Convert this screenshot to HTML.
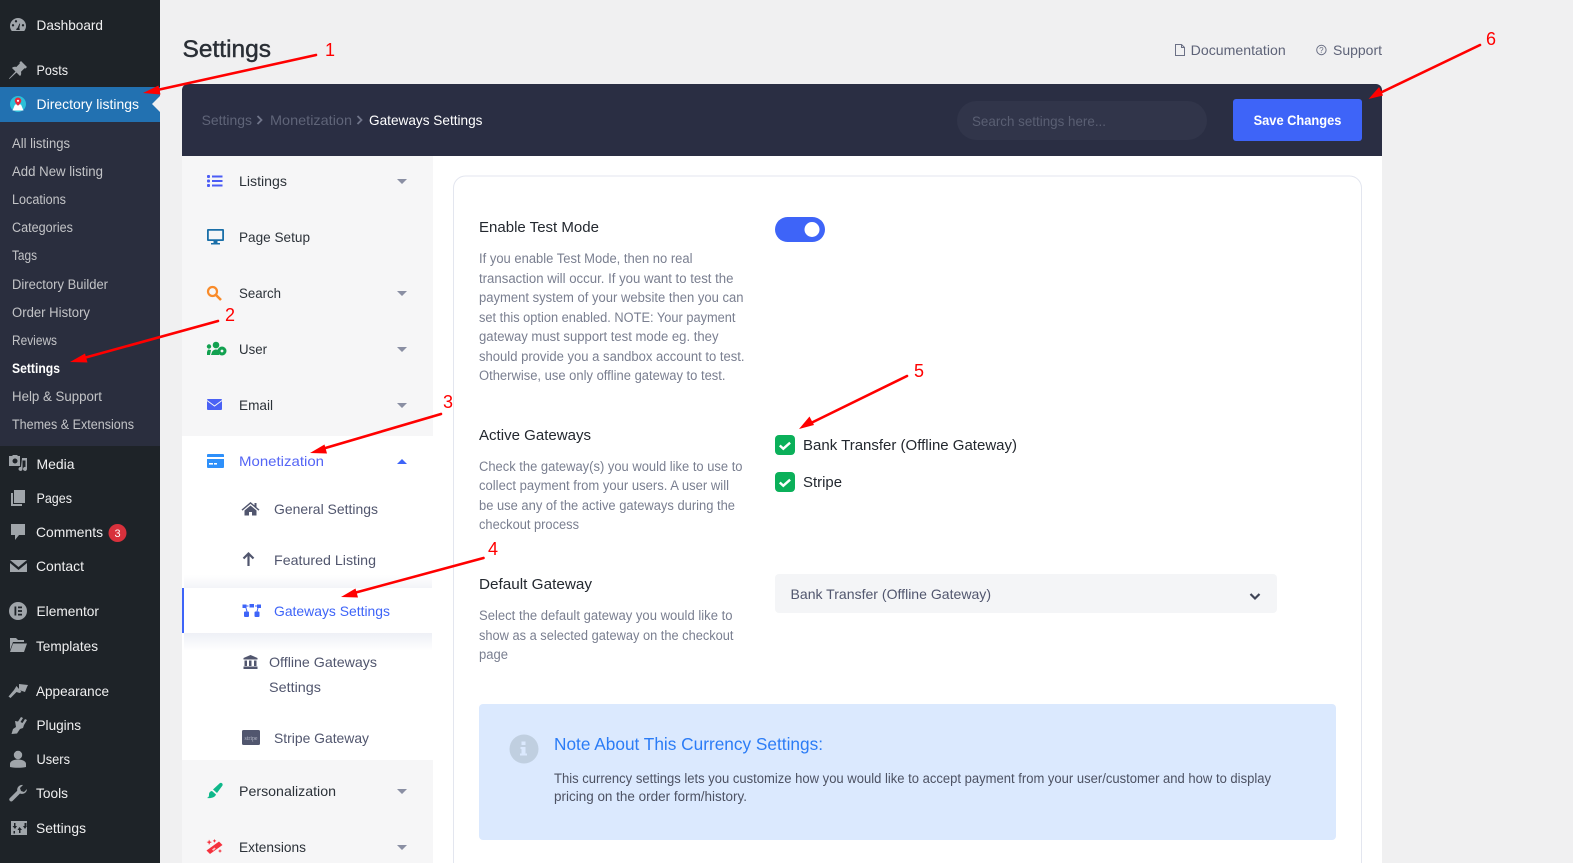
<!DOCTYPE html>
<html lang="en"><head><meta charset="utf-8"><title>Settings</title>
<style>
html,body{margin:0;padding:0;background:#f0f0f1;width:1573px;height:863px;overflow:hidden}
svg{display:block}
text{font-family:"Liberation Sans",sans-serif;white-space:pre}
.m{font-size:14px;fill:#f0f0f1}
.s{font-size:13.5px;fill:#c3c4c7}
.n{font-size:14px;fill:#2c3239}
.u{font-size:14px;fill:#51566e}
.p{font-size:13.5px;fill:#7a7f90}
.h{font-size:15px;fill:#23282f}
.r{font-size:18px;fill:#f00}
.i{fill:#a0a5aa}
</style></head><body>
<svg width="1573" height="863" viewBox="0 0 1573 863" xmlns="http://www.w3.org/2000/svg">
<defs>
<linearGradient id="sd" x1="0" y1="0" x2="0" y2="1"><stop offset="0" stop-color="#eef0f6"/><stop offset="1" stop-color="#fff"/></linearGradient>
<linearGradient id="su" x1="0" y1="1" x2="0" y2="0"><stop offset="0" stop-color="#f3f4f8"/><stop offset="1" stop-color="#fff"/></linearGradient>
</defs>
<rect width="1573" height="863" fill="#f0f0f1"/>

<!-- WP sidebar -->
<rect width="160" height="863" fill="#1e2328"/>
<rect y="122" width="160" height="324" fill="#2a2e3e"/>
<rect y="87" width="160" height="35" fill="#2271b1"/>
<path d="M160 96l-8 8 8 8z" fill="#f0f0f1"/>

<!-- sidebar icons -->
<path class="i" fill-rule="evenodd" d="M18 18a8 8 0 0 0-8 8c0 2 .7 3.700 1.800 5h12.400A8 8 0 0 0 26 26a8 8 0 0 0-8-8zm-5 8.500a1.200 1.200 0 1 1 0-2.400a1.200 1.200 0 0 1 0 2.400zm3-4a1.200 1.200 0 1 1 0-2.400a1.200 1.200 0 0 1 0 2.400zm3.800 7.500h-3.600c0-1 .6-1.700 1.300-2l2-4.500 .6 .2-.8 4.400c.4.400.5 1.200.5 1.900zm3.200-3.500a1.200 1.200 0 1 1 0-2.400a1.200 1.200 0 0 1 0 2.400z"/>
<path class="i" d="M21 61l6 6-1.500 1.500-1-.3-3.500 3.500c.5 2 0 3.500-1 4.300l-3.500-3.500-7 6.500-.5-.5 6.500-7-3.500-3.500c.8-1 2.300-1.500 4.300-1l3.500-3.500-.3-1z"/>
<circle cx="18" cy="104" r="8" fill="#2bbfd8"/>
<path d="M12.500 110.500l2.500-6h6l2.500 6z" fill="#fff"/>
<path d="M18 97.500a3.300 3.300 0 0 1 3.300 3.300c0 2-3.300 5-3.300 5s-3.300-3-3.300-5a3.300 3.300 0 0 1 3.300-3.300z" fill="#e8283c"/><circle cx="18" cy="100.800" r="1.100" fill="#fff"/>
<path class="i" fill-rule="evenodd" d="M9 456h3l1-1h4l1 1h2v10H9zm6 2.500a2.500 2.500 0 1 0 0 5 2.500 2.500 0 0 0 0-5z"/>
<path class="i" d="M22 458h5v11a2 2 0 1 1-1.500-2v-6.500H22.500v8.500a2 2 0 1 1-1.500-2z"/>
<path class="i" d="M14 490h11v13H14zM11 493h2v11h9v2H11z"/>
<path class="i" d="M11 524h14v11h-6l-4 5v-5h-4z"/>
<path class="i" d="M10 560h17l-8.500 7zM10 563l8.500 7 8.500-7v9H10z"/>
<path class="i" fill-rule="evenodd" d="M18 602a9 9 0 1 0 0 18 9 9 0 0 0 0-18zm-3.500 4.500h1.800v9h-1.800zm3.500 0h4v1.800h-4zm0 3.600h4v1.800h-4zm0 3.600h4v1.800h-4z"/>
<path class="i" d="M10 638h6l2 2h6v2h-11l-3 8zM13 643.500h14l-3 8.500H10z"/>
<path class="i" d="M19 684l9 1-1 2-2 5-6-2zM16.500 686l5 6-2 1-3-1-6 6-2-1.500 5.500-6.500z"/>
<path class="i" d="M21 717l2 1-2.500 4 2 1 2.500-4 2 1-3 5-1 3-3 1-2 3-1 1.500-5.500 .5 1.500-5 3-2-.5-3-.5-3 3 .5z"/>
<circle class="i" cx="18" cy="755" r="4.200"/>
<path class="i" d="M10 767v-3c0-3 4-4.500 8-4.500s8 1.500 8 4.500v3c-5 1-11 1-16 0z"/>
<path class="i" d="M27 789a5 5 0 0 1-7 4.500l-7.500 7.500a2 2 0 0 1-2.800-2.800l7.500-7.500A5 5 0 0 1 23 785l-3 3 1 3 3 1 3-3z"/>
<path class="i" fill-rule="evenodd" d="M11 821h16v14H11zm3 2v3h-1.500l2.500 3 2-3h-1.500v-3zm-.5 8v2.500h1.500V831zm7 2v-3H22l-2.500-3-2 3H19v3zm4-10v3H23l2 3 2-3h-.5v-3z"/>

<!-- sidebar text -->
<text class="m" x="36.500" y="30" textLength="66.500" lengthAdjust="spacingAndGlyphs">Dashboard</text>
<text class="m" x="36.500" y="75" textLength="31.500" lengthAdjust="spacingAndGlyphs">Posts</text>
<text class="m" x="36.500" y="109" textLength="102.500" lengthAdjust="spacingAndGlyphs" style="fill:#fff">Directory listings</text>
<text class="s" x="12" y="148" textLength="58" lengthAdjust="spacingAndGlyphs">All listings</text>
<text class="s" x="12" y="176" textLength="91" lengthAdjust="spacingAndGlyphs">Add New listing</text>
<text class="s" x="12" y="204" textLength="54" lengthAdjust="spacingAndGlyphs">Locations</text>
<text class="s" x="12" y="232" textLength="61" lengthAdjust="spacingAndGlyphs">Categories</text>
<text class="s" x="12" y="260" textLength="25" lengthAdjust="spacingAndGlyphs">Tags</text>
<text class="s" x="12" y="289" textLength="96" lengthAdjust="spacingAndGlyphs">Directory Builder</text>
<text class="s" x="12" y="317" textLength="78" lengthAdjust="spacingAndGlyphs">Order History</text>
<text class="s" x="12" y="345" textLength="45" lengthAdjust="spacingAndGlyphs">Reviews</text>
<text class="s" x="12" y="373" textLength="48" lengthAdjust="spacingAndGlyphs" style="fill:#fff;font-weight:700">Settings</text>
<text class="s" x="12" y="401" textLength="90" lengthAdjust="spacingAndGlyphs">Help &amp; Support</text>
<text class="s" x="12" y="429" textLength="122" lengthAdjust="spacingAndGlyphs">Themes &amp; Extensions</text>
<text class="m" x="36.500" y="469" textLength="38" lengthAdjust="spacingAndGlyphs">Media</text>
<text class="m" x="36.500" y="503" textLength="35.500" lengthAdjust="spacingAndGlyphs">Pages</text>
<text class="m" x="36" y="537" textLength="67" lengthAdjust="spacingAndGlyphs">Comments</text>
<circle cx="117.500" cy="533" r="9" fill="#d8313c"/>
<text x="117.500" y="537" text-anchor="middle" style="font-size:11px;fill:#fff">3</text>
<text class="m" x="36" y="571" textLength="48" lengthAdjust="spacingAndGlyphs">Contact</text>
<text class="m" x="36.500" y="616" textLength="62.500" lengthAdjust="spacingAndGlyphs">Elementor</text>
<text class="m" x="36" y="651" textLength="62" lengthAdjust="spacingAndGlyphs">Templates</text>
<text class="m" x="36" y="696" textLength="73" lengthAdjust="spacingAndGlyphs">Appearance</text>
<text class="m" x="36.500" y="730" textLength="44.500" lengthAdjust="spacingAndGlyphs">Plugins</text>
<text class="m" x="36.500" y="764" textLength="33.500" lengthAdjust="spacingAndGlyphs">Users</text>
<text class="m" x="36" y="798" textLength="32" lengthAdjust="spacingAndGlyphs">Tools</text>
<text class="m" x="36" y="833" textLength="50" lengthAdjust="spacingAndGlyphs">Settings</text>

<!-- page head -->
<text x="182.500" y="57" textLength="88.500" lengthAdjust="spacingAndGlyphs" stroke="#2a2f36" stroke-width=".45" style="font-size:24px;fill:#2a2f36">Settings</text>
<path d="M1175.500 44.500h6l3 3v8h-9zM1181.500 44.500v3h3" fill="none" stroke="#6b7085"/>
<text x="1190.700" y="55" textLength="95" lengthAdjust="spacingAndGlyphs" style="font-size:14px;fill:#5e6378">Documentation</text>
<circle cx="1321.400" cy="50" r="4.700" fill="none" stroke="#6b7085"/>
<text x="1321.400" y="53" text-anchor="middle" style="font-size:8px;fill:#6b7085">?</text>
<text x="1333" y="55" textLength="49" lengthAdjust="spacingAndGlyphs" style="font-size:14px;fill:#5e6378">Support</text>

<!-- panel -->
<rect x="182" y="156" width="1200" height="707" fill="#fff"/>
<path d="M182 156V90a6 6 0 0 1 6-6H1376a6 6 0 0 1 6 6V156z" fill="#2a2e43"/>
<text x="201.600" y="125" textLength="50.400" lengthAdjust="spacingAndGlyphs" style="font-size:14px;fill:#5f6478">Settings</text>
<path d="M257.500 116l4 4-4 4" fill="none" stroke="#70758a" stroke-width="1.800"/>
<text x="270" y="125" textLength="82" lengthAdjust="spacingAndGlyphs" style="font-size:14px;fill:#5f6478">Monetization</text>
<path d="M357.500 116l4 4-4 4" fill="none" stroke="#70758a" stroke-width="1.800"/>
<text x="369" y="125" textLength="113.500" lengthAdjust="spacingAndGlyphs" style="font-size:14px;fill:#fff">Gateways Settings</text>
<rect x="957" y="101" width="250" height="39" rx="19.500" fill="#31354a"/>
<text x="972" y="126" textLength="134" lengthAdjust="spacingAndGlyphs" style="font-size:14px;fill:#5a5f73">Search settings here...</text>
<rect x="1233" y="99" width="129" height="42" rx="3" fill="#3e64f8"/>
<text x="1253.600" y="125" textLength="87.800" lengthAdjust="spacingAndGlyphs" style="font-size:14px;font-weight:700;fill:#fff">Save Changes</text>

<!-- left nav -->
<rect x="182" y="156" width="251" height="280" fill="#f6f6f7"/>
<rect x="182" y="760" width="251" height="103" fill="#f6f6f7"/>
<rect x="182" y="436" width="251" height="324" fill="#fff"/>
<rect x="184" y="575" width="248" height="13" fill="url(#su)"/>
<rect x="184" y="633" width="248" height="18" fill="url(#sd)"/>
<rect x="182" y="588" width="2" height="45" fill="#3e64f8"/>

<!-- nav icons -->
<g fill="#4b5cf5"><rect x="207" y="175" width="3" height="3" rx="1"/><rect x="207" y="179.500" width="3" height="3" rx="1"/><rect x="207" y="184" width="3" height="3" rx="1"/><rect x="212" y="175.500" width="10.500" height="2"/><rect x="212" y="180" width="10.500" height="2"/><rect x="212" y="184.500" width="10.500" height="2"/></g>
<path fill="#1a6fa8" fill-rule="evenodd" d="M208 229h15a1 1 0 0 1 1 1v10a1 1 0 0 1-1 1h-5.500v2h2.500v1.500h-9V243h2.500v-2H208a1 1 0 0 1-1-1v-10a1 1 0 0 1 1-1zm.8 1.800v8.400h13.400v-8.400z"/>
<circle cx="212.500" cy="291.500" r="4.500" fill="none" stroke="#f98b2a" stroke-width="2.200"/><path d="M216 295l5 5" stroke="#f98b2a" stroke-width="2.600"/>
<g fill="#12a150"><circle cx="216" cy="345" r="3.300"/><circle cx="209" cy="346.500" r="2.200"/><path d="M207 355v-3l1-2.500 3 .5-1 5zM211 355l1-3c1-2 3-2.500 4-2.500l3 .5v5z"/><circle cx="222" cy="351" r="4.500"/></g><circle cx="222" cy="351" r="1.400" fill="#f6f6f7"/>
<rect x="207" y="399" width="15" height="11" rx="1" fill="#4a61f5"/><path d="M207 400.500l7.500 5.500 7.500-5.500" fill="none" stroke="#f6f6f7"/>
<path fill="#2e90fa" d="M208 454h15a1 1 0 0 1 1 1v2h-17v-2a1 1 0 0 1 1-1zM207 459h17v8a1 1 0 0 1-1 1h-15a1 1 0 0 1-1-1z"/><rect x="209" y="463" width="4" height="1.600" fill="#fff"/><rect x="214" y="463" width="3" height="1.600" fill="#fff"/>
<path fill="#51566e" d="M250.500 502l4 3.400V503h2v4.100l3 2.500-1 1-8-6.700-8 6.700-1-1zM244.500 510.500l6-5 6 5v5h-4.500v-3.500h-3v3.500h-4.500z"/>
<path d="M248.500 566v-12M243.500 558.500l5-5 5 5" fill="none" stroke="#51566e" stroke-width="2.200"/>
<g fill="#3e64f8"><rect x="242.500" y="604.500" width="4" height="3.500"/><rect x="249.500" y="604" width="4.500" height="3.500"/><rect x="257" y="604.500" width="4" height="3.500"/><rect x="244" y="611.500" width="5" height="5.500" rx="1"/><rect x="254.500" y="611.500" width="5" height="5.500" rx="1"/><path d="M246.500 606h2M255 606h2M246 608l1 3.500M258 608l-1 3.500" stroke="#3e64f8" fill="none"/></g>
<path fill="#51566e" fill-rule="evenodd" d="M250.500 655l7 3v1.500h-14V658zM244.500 660.500h2.500v5.500h-2.500zM249 660.500h2.500v5.500H249zM254 660.500h2.500v5.500H254zM243.500 666.500h14V669h-14z"/>
<rect x="242" y="730" width="18" height="15" rx="1.500" fill="#51566e"/>
<text x="251" y="740" text-anchor="middle" textLength="13" lengthAdjust="spacingAndGlyphs" style="font-size:6px;fill:#b4b8c6;font-family:'Liberation Serif',serif">stripe</text>
<path fill="#0fb88a" d="M220 783c2-.5 3 .8 2.500 2.500L217 793l-4-3.500z"/><path fill="#0fb88a" d="M212 791l4 3.500c-1 3-5 4-9 3.500 2-1 2-2 2-3.500 0-2 1.500-3.500 3-3.500z"/>
<path fill="#f5313d" d="M219 841.500l3.500 3.500-12.500 9-3.500-3.500z"/><path fill="#fff" d="M212 849.500l2.500-2 1.200 1.200-2.500 2z" opacity=".7"/><path fill="#f5313d" d="M209 839.500l1 2 2 .5-2 1-1 2-.5-2-2-1 2-.5zM214.500 839l.6 1.300 1.300.6-1.300.6-.6 1.300-.6-1.300-1.300-.6 1.300-.6zM220 849l.6 1.400 1.400.6-1.400.6-.6 1.400-.6-1.400-1.400-.6 1.400-.6z"/>

<!-- nav text -->
<text class="n" x="239" y="186" textLength="48" lengthAdjust="spacingAndGlyphs">Listings</text>
<text class="n" x="239" y="242" textLength="71" lengthAdjust="spacingAndGlyphs">Page Setup</text>
<text class="n" x="239" y="298" textLength="42" lengthAdjust="spacingAndGlyphs">Search</text>
<text class="n" x="239" y="354" textLength="28" lengthAdjust="spacingAndGlyphs">User</text>
<text class="n" x="239" y="410" textLength="34" lengthAdjust="spacingAndGlyphs">Email</text>
<text class="n" x="239" y="466" textLength="85" lengthAdjust="spacingAndGlyphs" style="fill:#5465f5">Monetization</text>
<text class="u" x="274" y="514" textLength="104" lengthAdjust="spacingAndGlyphs">General Settings</text>
<text class="u" x="274" y="565" textLength="102" lengthAdjust="spacingAndGlyphs">Featured Listing</text>
<text class="u" x="274" y="616" textLength="116" lengthAdjust="spacingAndGlyphs" style="fill:#3e64f8">Gateways Settings</text>
<text class="u" x="269" y="667" textLength="108" lengthAdjust="spacingAndGlyphs">Offline Gateways</text>
<text class="u" x="269" y="692" textLength="52" lengthAdjust="spacingAndGlyphs">Settings</text>
<text class="u" x="274" y="743" textLength="95" lengthAdjust="spacingAndGlyphs">Stripe Gateway</text>
<text class="n" x="239" y="796" textLength="97" lengthAdjust="spacingAndGlyphs">Personalization</text>
<text class="n" x="239" y="852" textLength="67" lengthAdjust="spacingAndGlyphs">Extensions</text>
<g fill="#8a8fa3"><path d="M397 179h10l-5 5zM397 291h10l-5 5zM397 347h10l-5 5zM397 403h10l-5 5zM397 789h10l-5 5zM397 845h10l-5 5z"/></g>
<path d="M397 464h10l-5-5z" fill="#3e64f8"/>

<!-- card -->
<path d="M453.500 863V188a12 12 0 0 1 12-12H1349.500a12 12 0 0 1 12 12V863" fill="#fff" stroke="#e3e6ef"/>
<text class="h" x="479" y="232" textLength="120" lengthAdjust="spacingAndGlyphs">Enable Test Mode</text>
<text class="p" x="479" y="263" textLength="213.500" lengthAdjust="spacingAndGlyphs">If you enable Test Mode, then no real</text>
<text class="p" x="479" y="283" textLength="254.500" lengthAdjust="spacingAndGlyphs">transaction will occur. If you want to test the</text>
<text class="p" x="479" y="302" textLength="264.500" lengthAdjust="spacingAndGlyphs">payment system of your website then you can</text>
<text class="p" x="479" y="322" textLength="256.500" lengthAdjust="spacingAndGlyphs">set this option enabled. NOTE: Your payment</text>
<text class="p" x="479" y="341" textLength="239.500" lengthAdjust="spacingAndGlyphs">gateway must support test mode eg. they</text>
<text class="p" x="479" y="361" textLength="265.500" lengthAdjust="spacingAndGlyphs">should provide you a sandbox account to test.</text>
<text class="p" x="479" y="380" textLength="246.500" lengthAdjust="spacingAndGlyphs">Otherwise, use only offline gateway to test.</text>
<rect x="775" y="217" width="50" height="25" rx="12.500" fill="#3e64f8"/>
<circle cx="812" cy="229.500" r="7.500" fill="#fff"/>

<text class="h" x="479" y="440" textLength="112" lengthAdjust="spacingAndGlyphs">Active Gateways</text>
<text class="p" x="479" y="471" textLength="263.500" lengthAdjust="spacingAndGlyphs">Check the gateway(s) you would like to use to</text>
<text class="p" x="479" y="490" textLength="250" lengthAdjust="spacingAndGlyphs">collect payment from your users. A user will</text>
<text class="p" x="479" y="510" textLength="256" lengthAdjust="spacingAndGlyphs">be use any of the active gateways during the</text>
<text class="p" x="479" y="529" textLength="100" lengthAdjust="spacingAndGlyphs">checkout process</text>
<rect x="775" y="435" width="20" height="20" rx="4" fill="#0bb05a"/>
<path d="M779.800 445.500l3.500 3.200 6.800-6" fill="none" stroke="#fff" stroke-width="2.400"/>
<text class="h" x="803" y="450" textLength="214" lengthAdjust="spacingAndGlyphs">Bank Transfer (Offline Gateway)</text>
<rect x="775" y="472" width="20" height="20" rx="4" fill="#0bb05a"/>
<path d="M779.800 482.500l3.500 3.200 6.800-6" fill="none" stroke="#fff" stroke-width="2.400"/>
<text class="h" x="803" y="487" textLength="39" lengthAdjust="spacingAndGlyphs">Stripe</text>

<text class="h" x="479" y="589" textLength="113" lengthAdjust="spacingAndGlyphs">Default Gateway</text>
<text class="p" x="479" y="620" textLength="253.500" lengthAdjust="spacingAndGlyphs">Select the default gateway you would like to</text>
<text class="p" x="479" y="640" textLength="254.500" lengthAdjust="spacingAndGlyphs">show as a selected gateway on the checkout</text>
<text class="p" x="479" y="659" textLength="29" lengthAdjust="spacingAndGlyphs">page</text>
<rect x="775" y="574" width="502" height="39" rx="4" fill="#f4f5f7"/>
<text x="790.500" y="599" textLength="200.500" lengthAdjust="spacingAndGlyphs" style="font-size:14px;fill:#51566e">Bank Transfer (Offline Gateway)</text>
<path d="M1250.500 594l4.500 4.500 4.500-4.500" fill="none" stroke="#3f4456" stroke-width="2.200"/>

<!-- note -->
<rect x="479" y="704" width="857" height="136" rx="4" fill="#dbe9fe"/>
<circle cx="524" cy="749" r="14.500" fill="#c0cfe0"/>
<path fill="#dbe9fe" d="M521.500 741.500h4v3.500h-4zM520.500 747h5v6.500h1.500v2h-7v-2h1.500v-4.500h-1z"/>
<text x="554" y="750" textLength="269" lengthAdjust="spacingAndGlyphs" style="font-size:17.500px;fill:#2b7cf6">Note About This Currency Settings:</text>
<text x="554" y="783" textLength="717" lengthAdjust="spacingAndGlyphs" style="font-size:13.500px;fill:#4d5263">This currency settings lets you customize how you would like to accept payment from your user/customer and how to display</text>
<text x="554" y="801" textLength="193" lengthAdjust="spacingAndGlyphs" style="font-size:13.500px;fill:#4d5263">pricing on the order form/history.</text>

<!-- annotations -->
<g stroke="#f00" stroke-width="2.600" stroke-linecap="round" fill="none">
<path d="M316 55L155 90.500"/>
<path d="M218 321L82 358.500"/>
<path d="M441 414L322 449"/>
<path d="M483.500 558L354 593"/>
<path d="M907 376L811 423"/>
<path d="M1480 45L1380 93"/>
</g>
<g fill="#f00">
<path d="M143 93l15.500-7.500 2 9z"/>
<path d="M70 362l15-8.500 2.500 9z"/>
<path d="M310 453l14.500-8.500 2.500 9z"/>
<path d="M341 597l14.500-8.500 2.500 9z"/>
<path d="M799 429l10.500-12.500 4.500 8.500z"/>
<path d="M1368.600 99l10.500-12 4 8.500z"/>
</g>
<text class="r" x="325" y="56">1</text>
<text class="r" x="225" y="321">2</text>
<text class="r" x="443" y="408">3</text>
<text class="r" x="488" y="555">4</text>
<text class="r" x="914" y="377">5</text>
<text class="r" x="1486" y="45">6</text>
</svg>
</body></html>
